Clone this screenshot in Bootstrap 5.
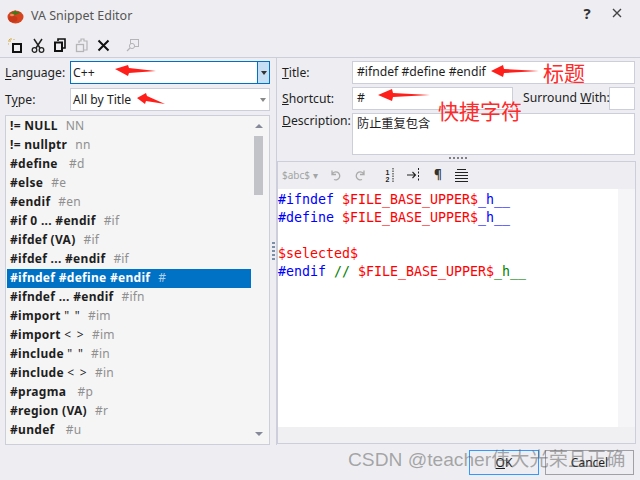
<!DOCTYPE html>
<html lang="en"><head><meta charset="utf-8"><title>VA Snippet Editor</title>
<link href="https://cdn.jsdelivr.net/npm/bootstrap@5.3.0/dist/css/bootstrap.min.css" rel="stylesheet">
<style>
html,body{margin:0;width:640px;height:480px;overflow:hidden;background:#eeeef2}
body{font:12.2px/16px "Noto Sans","Noto Sans CJK SC",sans-serif;color:#1e1e1e}
.win{position:relative;width:640px;height:480px;background:#eeeef2}
.ttl{height:31px;padding:0 10px 0 7px;color:#555;font-size:12.5px}
.ttl svg{margin-right:7px}
.ttlbtn{font-weight:700;color:#333;font-size:15px;width:32px;text-align:center}
.ttlup{margin-bottom:6px}
.tbar{height:27px;padding:3px 0 0 8px;border-bottom:1px solid #cccedb}
.tbar svg{display:block}
.mainrow{height:387px}
.leftp{width:276px;padding:3px 6px 0 5px}
.rightp{width:364px;padding:3px 5px 0 0;border-left:1px solid #cccedb}
.lab{width:65px;flex:none}
.lab u{text-underline-offset:2px}
.combo{height:23px;width:200px;background:#fff;border:1px solid #cccedb;padding:0 2px;line-height:19px;border-radius:0;font-size:12.2px;color:#1e1e1e}
.combo.act{border-color:#0072c6}
.drop{width:12px;height:21px;margin-right:-2px;border-left:1px solid #0072c6;background:#c7dff4}
.drop.quiet{background:none;border:0}
.tri{width:0;height:0;border:3.5px solid transparent;border-top:4px solid #333;border-bottom:0}
.quiet .tri{border-top-color:#888}
.frow{margin-bottom:4px}
.rightp .frow{margin-bottom:3px}
.snips{width:265px;height:330px;border:1px solid #cccedb;background:#f5f5f5;padding:1px;border-radius:0}
.sitem{height:19px;line-height:18px;padding:0 3px;width:244px;white-space:nowrap;font-weight:700;background:none;border:0;color:#1e1e1e;font-size:12px;letter-spacing:.3px}
.sitem i{font-style:normal;font-weight:400;color:#8f8f8f;margin-left:8px;letter-spacing:.2px}
.sitem b{font-weight:400;word-spacing:2px}
.sitem.on{background:#0072c6;color:#fff}
.sitem.on i{color:#b0cfe9}
.sbar{width:10px;margin:0 4px 0 0;position:relative}
.thumb{width:9px;height:59px;margin-top:19px;background:#c2c3c9}
.arw{position:absolute;left:1px;width:0;height:0;border:4px solid transparent}
.arw.up{top:7px;border-bottom:4px solid #868999;border-top:0}
.arw.dn{bottom:7px;border-top:4px solid #868999;border-bottom:0}
.rlab{width:75px;flex:none;padding-left:5px}
.fld{background:#fff;border:1px solid #cccedb;padding:0 4px;height:23px;line-height:20px;border-radius:0;color:#1e1e1e;font-size:12.2px}
.w283{width:283px}.w161{width:161px}.w26{width:26px;padding:0}
.h41{height:42px;line-height:19px}
.swlab{width:96px;padding-left:10px;white-space:nowrap;position:relative;top:-1px}
.split{height:6px;margin-left:172px}
.split span{width:2px;height:2px;margin-right:2px;background:#7f7f87}
.edit{width:359px;height:283px;border:1px solid #cccedb;border-radius:0;background:#f5f5f7}
.etool{height:27px;padding-left:4px;color:#aaa;font-size:10px;background:#eeeef2}
.etool svg{display:block;flex:none}
.abc{width:36px;color:#a2a4a5;font-size:10px;white-space:nowrap;flex:none}
.gap-u{margin-left:12px}.gap-r{margin-left:14px}.gap-n{margin-left:19px}.gap-t{margin-left:12px}.gap-p{margin-left:14px}.gap-l{margin-left:13px}
.pil{width:8px;color:#333;font-size:12px;font-weight:700}
.code{height:239px;background:#fff;margin-right:17px;padding-top:2px;font:13.29px/18.1px "DejaVu Sans Mono",monospace;white-space:pre}
.code .k{color:#00f}.code .r{color:#f00}.code .g{color:#008000}
.efoot{height:16px;background:#f0f0f3}
.btnw{height:36px;padding:5px 6px 0 0;gap:6px}
.dbtn{height:25px;line-height:23px;padding:0;border-radius:0;font-size:12px;color:#1e1e1e;background:#eeeef2}
.dbtn.ok{width:70px;border:1px solid #3399ff}
.dbtn.cn{width:89px;border:1px solid #a0a0a6}
.dbtn.ok:hover,.dbtn.cn:hover{background:#eeeef2}
.over{position:absolute;pointer-events:none}
.anno{color:#ff2a2a;font:21px/26px "Noto Sans CJK SC",sans-serif}
.mark1{left:543px;top:59px}
.mark2{left:438px;top:97px}
.wmk{left:348px;top:447px;font:19.2px/26px "Liberation Sans","Noto Sans CJK SC",sans-serif;color:rgba(90,90,90,.5);white-space:nowrap}
.arrows{left:0;top:0}
.splitv{position:absolute;left:272px;top:242px;width:3px;height:19px;background:repeating-linear-gradient(#7a8fa8 0 2px,transparent 2px 4px)}
</style></head><body>
<div class="win">
 <div class="ttl d-flex align-items-center">
  <svg width="17" height="16" viewBox="0 0 17 16"><ellipse cx="8.5" cy="9" rx="8" ry="6.5" fill="#d8431f"/><ellipse cx="6" cy="11" rx="4.5" ry="3" fill="#c5381a"/><ellipse cx="5" cy="7" rx="2" ry="1.2" fill="#f08a60"/><path d="M3 4.5L7 4l1-2 1.5 2 4.5.5-3.5 1.5-2.2 1-1.8-1z" fill="#3d7a1c"/></svg>
  <span class="flex-grow-1">VA Snippet Editor</span>
  <span class="ttlbtn ttlup">?</span>
  <svg width="12" height="12" viewBox="0 0 12 12" class="ms-2 ttlup"><path d="M2 2l8 8M10 2l-8 8" stroke="#444" stroke-width="1.4"/></svg>
 </div>
 <div class="tbar d-flex align-items-center gap-2">
  <svg width="15" height="15" viewBox="0 0 15 15"><rect x="5" y="6" width="8" height="8" fill="none" stroke="#111" stroke-width="2"/><path d="M0 3h3M3 0v2M1 1l1 1M0 6h1M6 1v1" stroke="#d8a838"/></svg>
  <svg width="14" height="15" viewBox="0 0 14 15"><path d="M3 1l6 9M11 1L5 10" stroke="#222" stroke-width="1.5" fill="none"/><circle cx="3.5" cy="12" r="2.3" fill="none" stroke="#222" stroke-width="1.3"/><circle cx="10.5" cy="12" r="2.3" fill="none" stroke="#222" stroke-width="1.3"/></svg>
  <svg width="14" height="15" viewBox="0 0 14 15"><path d="M5 3V1h7v9h-2" fill="none" stroke="#111" stroke-width="1.6"/><rect x="2" y="4.5" width="7" height="8.5" fill="none" stroke="#111" stroke-width="2"/></svg>
  <svg width="14" height="15" viewBox="0 0 14 15"><path d="M4 5V3h2V1h3v2h3v9h-3" fill="none" stroke="#b5b5b8" stroke-width="1.2"/><rect x="1.5" y="6.5" width="7" height="7" fill="none" stroke="#b5b5b8" stroke-width="1.3"/></svg>
  <svg width="13" height="15" viewBox="0 0 13 15"><path d="M1.5 2.5l10 10M11.5 2.5l-10 10" stroke="#111" stroke-width="2"/></svg>
  <svg width="14" height="15" viewBox="0 0 14 15" class="ms-2"><rect x="4.5" y="1.5" width="8" height="7" fill="none" stroke="#b5b5b8"/><circle cx="6" cy="8" r="2.6" fill="#eeeef2" stroke="#b5b5b8"/><path d="M4 10l-3 3" stroke="#b5b5b8" stroke-width="1.3"/></svg>
 </div>
 <div class="mainrow d-flex">
  <div class="leftp">
   <div class="frow d-flex align-items-center"><span class="lab"><u>L</u>anguage:</span>
    <div class="combo act form-control d-flex justify-content-between align-items-center"><span>C++</span><span class="drop d-flex align-items-center justify-content-center"><span class="tri"></span></span></div></div>
   <div class="frow d-flex align-items-center"><span class="lab">T<u>y</u>pe:</span>
    <div class="combo form-control d-flex justify-content-between align-items-center"><span>All by Title</span><span class="drop quiet d-flex align-items-center justify-content-center"><span class="tri"></span></span></div></div>
   <div class="snips d-flex justify-content-between">
    <div class="list-group">
     <div class="sitem list-group-item">!= NULL<i>NN</i></div>
     <div class="sitem list-group-item">!= nullptr<i>nn</i></div>
     <div class="sitem list-group-item">#define<i>&nbsp;#d</i></div>
     <div class="sitem list-group-item">#else<i>#e</i></div>
     <div class="sitem list-group-item">#endif<i>#en</i></div>
     <div class="sitem list-group-item">#if 0 ... #endif<i>#if</i></div>
     <div class="sitem list-group-item">#ifdef (VA)<i>#if</i></div>
     <div class="sitem list-group-item">#ifdef ... #endif<i>#if</i></div>
     <div class="sitem list-group-item on">#ifndef #define #endif<i>#</i></div>
     <div class="sitem list-group-item">#ifndef ... #endif<i>#ifn</i></div>
     <div class="sitem list-group-item">#import <b>" "</b><i>#im</i></div>
     <div class="sitem list-group-item">#import <b>&lt; &gt;</b><i>#im</i></div>
     <div class="sitem list-group-item">#include <b>" "</b><i>#in</i></div>
     <div class="sitem list-group-item">#include <b>&lt; &gt;</b><i>#in</i></div>
     <div class="sitem list-group-item">#pragma<i>&nbsp;#p</i></div>
     <div class="sitem list-group-item">#region (VA)<i>#r</i></div>
     <div class="sitem list-group-item">#undef<i>&nbsp;#u</i></div>
    </div>
    <div class="sbar"><span class="arw up"></span><div class="thumb"></div><span class="arw dn"></span></div>
   </div>
  </div>
  <div class="rightp">
   <div class="frow d-flex align-items-center"><span class="rlab"><u>T</u>itle:</span><div class="fld form-control w283">#ifndef #define #endif</div></div>
   <div class="frow d-flex align-items-center"><span class="rlab"><u>S</u>hortcut:</span><div class="fld form-control w161">#</div><span class="swlab">Surround <u>W</u>ith:</span><div class="fld form-control w26"></div></div>
   <div class="d-flex"><span class="rlab"><u>D</u>escription:</span><div class="fld form-control w283 h41">防止重复包含</div></div>
   <div class="split d-flex align-items-center"><span></span><span></span><span></span><span></span><span></span></div>
   <div class="edit card">
    <div class="etool d-flex align-items-center">
     <span class="abc">$abc$ ▾</span>
     <svg class="gap-u" width="11" height="12" viewBox="0 0 11 12"><path d="M2 5.5A4 4 0 1 1 4 10.5M2 1.5v4h4" fill="none" stroke="#aaa" stroke-width="1.3"/></svg>
     <svg class="gap-r" width="11" height="12" viewBox="0 0 11 12"><path d="M9 5.5A4 4 0 1 0 7 10.5M9 1.5v4H5" fill="none" stroke="#aaa" stroke-width="1.3"/></svg>
     <svg class="gap-n" width="10" height="14" viewBox="0 0 10 14"><text x="0.5" y="6.5" font-size="7" font-weight="700" font-family="Liberation Sans" fill="#222">1</text><text x="0.5" y="13.5" font-size="7" font-weight="700" font-family="Liberation Sans" fill="#222">2</text><path d="M8 0v14" stroke="#222" stroke-dasharray="1.5 1"/></svg>
     <svg class="gap-t" width="13" height="14" viewBox="0 0 13 14"><path d="M0 7h8M5.5 4l3 3-3 3" fill="none" stroke="#222" stroke-width="1.1"/><path d="M11.5 0v14" stroke="#222" stroke-dasharray="2 1.5"/></svg>
     <span class="gap-p pil">¶</span>
     <svg class="gap-l" width="13" height="14" viewBox="0 0 13 14"><path d="M2 1.5h9M0 4.5h13M0 7.5h13M0 10.5h13M0 13.5h13" stroke="#222"/></svg>
    </div>
    <div class="code"><span class="k">#ifndef</span> <span class="r">$FILE_BASE_UPPER$</span><span class="k">_h__</span>
<span class="k">#define</span> <span class="r">$FILE_BASE_UPPER$</span><span class="k">_h__</span>

<span class="r">$selected$</span>
<span class="k">#endif</span> <span class="g">//</span> <span class="r">$FILE_BASE_UPPER$</span><span class="g">_h__</span></div>
    <div class="efoot"></div>
   </div>
  </div>
 </div>
 <div class="btnw d-flex justify-content-end">
  <button type="button" class="btn dbtn ok"><u>O</u>K</button>
  <button type="button" class="btn dbtn cn">Cancel</button>
 </div>
 <div class="splitv"></div>
 <svg class="over arrows" width="640" height="480" viewBox="0 0 640 480">
  <g fill="#ff1f1a">
   <path d="M115 69l13-4 1 3 27 3-27 2-1 3z"/>
   <path d="M137 98l9-5 1 3 18 8-19-3-1 3z"/>
   <path d="M491 71l12-6 1 4 35 2-35 2-1 4z"/>
   <path d="M378 95l14-6 1 4 37 2-37 2-1 4z"/>
  </g>
 </svg>
 <div class="over anno mark1">标题</div>
 <div class="over anno mark2">快捷字符</div>
 <div class="over wmk">CSDN @teacher伟大光荣且正确</div>
</div>
</body></html>
